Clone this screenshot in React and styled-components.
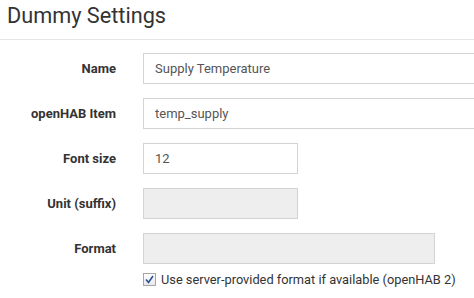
import React from 'react';
import styled, { createGlobalStyle } from 'styled-components';

const GlobalStyle = createGlobalStyle`
  body {
    margin: 0;
    background: #fff;
    font-family: Roboto, "Liberation Sans", sans-serif;
    overflow: hidden;
  }
`;

const Page = styled.div`
  width: 474px;
  height: 298px;
  overflow: hidden;
`;

const Header = styled.h1`
  margin: 0;
  height: 40px;
  box-sizing: border-box;
  padding: 2px 0 0 7px;
  font-size: 21.7px;
  font-weight: 400;
  line-height: 28px;
  color: #333;
  border-bottom: 1px solid #e5e5e5;
`;

const Form = styled.form`
  display: grid;
  grid-template-columns: 116px 1fr;
  column-gap: 27px;
  row-gap: 14px;
  padding-top: 13px;
  align-items: center;
`;

const Label = styled.label`
  text-align: right;
  font-size: 13px;
  font-weight: 700;
  color: #333;
`;

const Input = styled.input`
  box-sizing: border-box;
  width: ${p => p.$width}px;
  height: 31px;
  padding: 0 11px;
  border: 1px solid #d3d3d3;
  border-radius: 0;
  background: ${p => (p.disabled ? '#eee' : '#fff')};
  font-family: Roboto, "Liberation Sans", sans-serif;
  font-size: 13px;
  color: #555;
  outline: none;
`;

const CheckRow = styled.label`
  grid-column: 2;
  display: flex;
  align-items: center;
  gap: 5px;
  margin-top: -6px;
  font-size: 12.8px;
  color: #333;
`;

const Box = styled.span`
  box-sizing: border-box;
  width: 13px;
  height: 13px;
  border: 1px solid #a6a6a6;
  background: linear-gradient(#fff, #e8e8e8);
  display: flex;
  align-items: center;
  justify-content: center;
`;

const fields = [
  { label: 'Name', value: 'Supply Temperature', width: 340 },
  { label: 'openHAB Item', value: 'temp_supply', width: 340 },
  { label: 'Font size', value: '12', width: 155 },
  { label: 'Unit (suffix)', value: '', width: 155, disabled: true },
  { label: 'Format', value: '', width: 292, disabled: true }
];

const App = () => (
  <>
    <GlobalStyle />
    <Page>
      <Header>Dummy Settings</Header>
      <Form>
        {fields.map(f => (
          <React.Fragment key={f.label}>
            <Label>{f.label}</Label>
            <Input
              $width={f.width}
              defaultValue={f.value}
              disabled={f.disabled}
              readOnly
            />
          </React.Fragment>
        ))}
        <CheckRow>
          <Box>
            <svg width="9" height="9" viewBox="0 0 9 9">
              <path d="M1 4.5 L3.5 7.5 L8 1" fill="none" stroke="#2a4d9e" strokeWidth="1.6" />
            </svg>
          </Box>
          Use server-provided format if available (openHAB 2)
        </CheckRow>
      </Form>
    </Page>
  </>
);

export default App;
